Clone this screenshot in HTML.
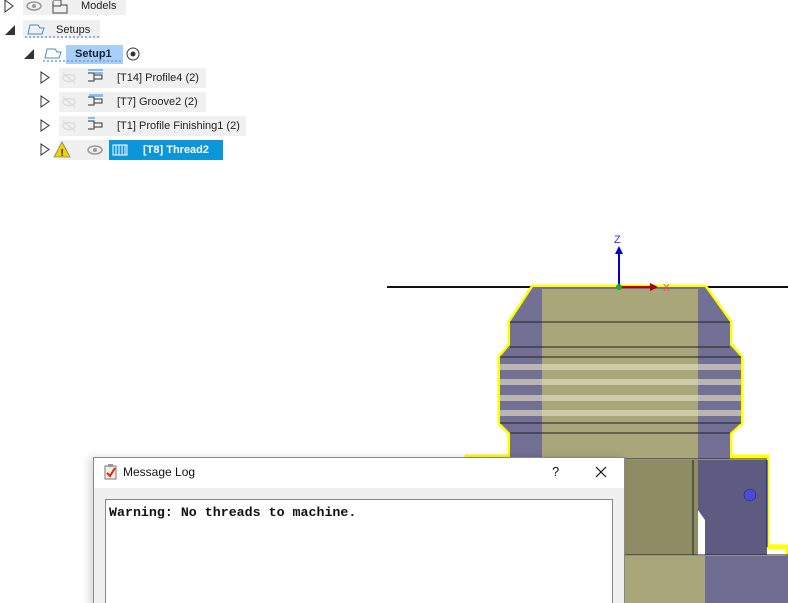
<!DOCTYPE html>
<html><head><style>
html,body{margin:0;width:788px;height:603px;overflow:hidden;background:#fff;font-family:"Liberation Sans",sans-serif;position:relative}
.a{position:absolute}
.t{font-size:11px;color:#222}
.row{background:#f0f0f0}
</style></head><body>
<div class="a row" style="left:23px;top:0;width:103px;height:15px"></div>
<div class="a row" style="left:23px;top:20px;width:77px;height:18px"></div>
<div class="a" style="left:66px;top:45px;width:57px;height:19px;background:#a8cff8"></div>
<div class="a row" style="left:59px;top:68px;width:147px;height:20px"></div>
<div class="a row" style="left:59px;top:92px;width:147px;height:20px"></div>
<div class="a row" style="left:59px;top:116px;width:187px;height:20px"></div>
<div class="a row" style="left:59px;top:140px;width:50px;height:20px"></div>
<div class="a" style="left:109px;top:140px;width:114px;height:20px;background:#0a96d8"></div>
<svg class="a" style="left:0;top:0" width="788" height="603">
<line x1="387" y1="287" x2="788" y2="287" stroke="#111" stroke-width="2"/>
<polygon points="533,287 705,287 730,322 730,345 741,357 741,423 730,433 730,457 767,457 767,547 788,547 788,603 467,603 467,457 510,457 510,433 500,423 500,357 510,345 510,322" fill="none" stroke="#ffff00" stroke-width="5"/>
<polygon points="533,287 705,287 730,322 730,345 741,357 741,423 730,433 730,459 510,459 510,433 500,423 500,357 510,345 510,322" fill="#737095"/>
<rect x="542" y="289" width="156" height="170" fill="#a9a77a"/>
<g opacity="0.6">
<rect x="500" y="364" width="241" height="6" fill="#e8e6c8"/>
<rect x="500" y="379" width="241" height="6" fill="#e8e6c8"/>
<rect x="500" y="395" width="241" height="6" fill="#e8e6c8"/>
<rect x="500" y="410" width="241" height="6" fill="#e8e6c8"/>
</g>
<g stroke="#222" stroke-width="1">
<line x1="510" y1="322" x2="730" y2="322"/><line x1="510" y1="347" x2="730" y2="347"/>
<line x1="500" y1="357" x2="741" y2="357"/><line x1="500" y1="423" x2="741" y2="423"/>
<line x1="510" y1="433" x2="730" y2="433"/><line x1="624" y1="459" x2="767" y2="459"/>
</g>
<rect x="624" y="460" width="74" height="95" fill="#8e8c62"/>
<polygon points="698,460 767,460 767,555 705,555 705,520 698,510" fill="#5e5b82"/>
<line x1="693" y1="460" x2="693" y2="555" stroke="#222"/>
<line x1="624" y1="555" x2="788" y2="555" stroke="#222"/>
<rect x="624" y="556" width="81" height="47" fill="#a9a77a"/>
<rect x="705" y="556" width="83" height="47" fill="#706d92"/>
<circle cx="750" cy="495" r="6" fill="#4a4adc" stroke="#222" stroke-width="0.5"/>
<line x1="767" y1="460" x2="767" y2="547" stroke="#0000cc"/>
<line x1="619" y1="287" x2="619" y2="252" stroke="#0000cc" stroke-width="2"/>
<polygon points="615,254 623,254 619,246" fill="#0000cc"/>
<line x1="619" y1="287" x2="652" y2="287" stroke="#b00" stroke-width="2"/>
<polygon points="650,283 650,291 658,287" fill="#a00"/>
<circle cx="619" cy="287" r="3" fill="#2a2"/>
<text x="614" y="243" font-size="11" fill="#33c" font-family="Liberation Sans">Z</text>
<text x="663" y="291" font-size="10" fill="#f44" font-family="Liberation Sans">X</text>
<g fill="none" stroke="#4a8ad0" stroke-width="1">
<path d="M28,34 L30,25 L38,25 L40,28 L44,28 L42,34 Z"/>
<path d="M45,58 L47,49 L55,49 L57,52 L61,52 L59,58 Z"/>
</g>
<g stroke="#7a9ad0" stroke-width="1.5" stroke-dasharray="2,2">
<line x1="25" y1="37" x2="99" y2="37"/><line x1="43" y1="61" x2="123" y2="61"/>
</g>
<g fill="none" stroke="#333" stroke-width="1">
<path d="M88,73 h6 v8 h-6 M94,75 h8 v4 h-8"/>
<path d="M88,97 h6 v8 h-6 M94,99 h8 v4 h-8"/>
<path d="M88,121 h6 v8 h-6 M94,123 h8 v4 h-8"/>
</g>
<g stroke="#1a8ae8" stroke-width="1">
<line x1="88" y1="70" x2="103" y2="70"/><line x1="94" y1="73" x2="103" y2="73"/>
<line x1="88" y1="118" x2="95" y2="118"/>
<line x1="90" y1="94" x2="90" y2="97"/><line x1="92" y1="94" x2="92" y2="97"/><line x1="94" y1="94" x2="94" y2="97"/><line x1="96" y1="94" x2="96" y2="97"/><line x1="98" y1="94" x2="98" y2="97"/><line x1="100" y1="94" x2="100" y2="97"/><line x1="102" y1="94" x2="102" y2="97"/>
</g>
<g fill="none" stroke="#ddd" stroke-width="1.5">
<ellipse cx="69" cy="78" rx="6" ry="3.5"/><line x1="63" y1="73" x2="75" y2="83"/>
<ellipse cx="69" cy="102" rx="6" ry="3.5"/><line x1="63" y1="97" x2="75" y2="107"/>
<ellipse cx="69" cy="126" rx="6" ry="3.5"/><line x1="63" y1="121" x2="75" y2="131"/>
</g>
<g stroke="#fff" stroke-width="1"><rect x="113" y="145" width="14" height="10" fill="none"/>
<line x1="116" y1="145" x2="116" y2="155"/><line x1="119" y1="145" x2="119" y2="155"/><line x1="122" y1="145" x2="122" y2="155"/><line x1="125" y1="145" x2="125" y2="155"/></g>
<ellipse cx="95" cy="150" rx="7" ry="4" fill="none" stroke="#999" stroke-width="1.5"/>
<circle cx="95" cy="150" r="2" fill="#999"/>
<circle cx="34" cy="6" r="2" fill="#999"/><ellipse cx="34" cy="6" rx="7" ry="4" fill="none" stroke="#999" stroke-width="1.5"/>
<path d="M53,1 v12 h14 v-8 h-6 v-5 h-8 M53,6 h8" fill="none" stroke="#444"/>
<polygon points="62,142 70,157 54,157" fill="#f5d000" stroke="#886" stroke-width="0.8"/>
<text x="60.5" y="156" font-size="10" font-weight="bold" fill="#222" font-family="Liberation Sans">!</text>
<polygon points="5,0 5,12 13,6" fill="none" stroke="#333"/>
<g fill="none" stroke="#333"><polygon points="41,72 41,83 49,77.5"/><polygon points="41,96 41,107 49,101.5"/><polygon points="41,120 41,131 49,125.5"/><polygon points="41,144 41,155 49,149.5"/></g>
<polygon points="5,35 15,35 15,25" fill="#333"/><polygon points="24,59 34,59 34,49" fill="#333"/>
<circle cx="133" cy="54" r="6" fill="none" stroke="#333"/><circle cx="133" cy="54" r="2.5" fill="#333"/>
</svg>
<div class="a t" style="left:81px;top:0">Models</div>
<div class="a t" style="left:56px;top:24px">Setups</div>
<div class="a t" style="left:75px;top:48px;font-weight:bold;color:#123">Setup1</div>
<div class="a t" style="left:117px;top:72px">[T14] Profile4 (2)</div>
<div class="a t" style="left:117px;top:96px">[T7] Groove2 (2)</div>
<div class="a t" style="left:117px;top:120px">[T1] Profile Finishing1 (2)</div>
<div class="a t" style="left:143px;top:144px;color:#fff;font-weight:bold">[T8] Thread2</div>
<div class="a" style="left:93px;top:457px;width:530px;height:150px;background:#f0f0f0;border:1px solid #888;box-shadow:-4px 0 8px rgba(0,0,0,0.15)">
<div style="height:30px;background:#fff"></div>
</div>
<svg class="a" style="left:104px;top:464px" width="14" height="16"><rect x="1" y="2" width="11" height="13" fill="#f4f0e0" stroke="#777"/><rect x="4" y="0" width="5" height="3" fill="#999"/><path d="M3,9 L6,12 L11,4" fill="none" stroke="#d22" stroke-width="2"/></svg>
<div class="a" style="left:123px;top:465px;font-size:12px;color:#111">Message Log</div>
<div class="a" style="left:552px;top:464px;font-size:13px;color:#111">?</div>
<svg class="a" style="left:595px;top:466px" width="12" height="12"><path d="M1,1 L11,11 M11,1 L1,11" stroke="#111" stroke-width="1.2"/></svg>
<div class="a" style="left:105px;top:499px;width:506px;height:110px;background:#fff;border:1px solid #888"></div>
<div class="a" style="left:109px;top:505px;font-family:'Liberation Mono',monospace;font-size:13.3px;font-weight:bold;color:#111">Warning: No threads to machine.</div>
</body></html>
